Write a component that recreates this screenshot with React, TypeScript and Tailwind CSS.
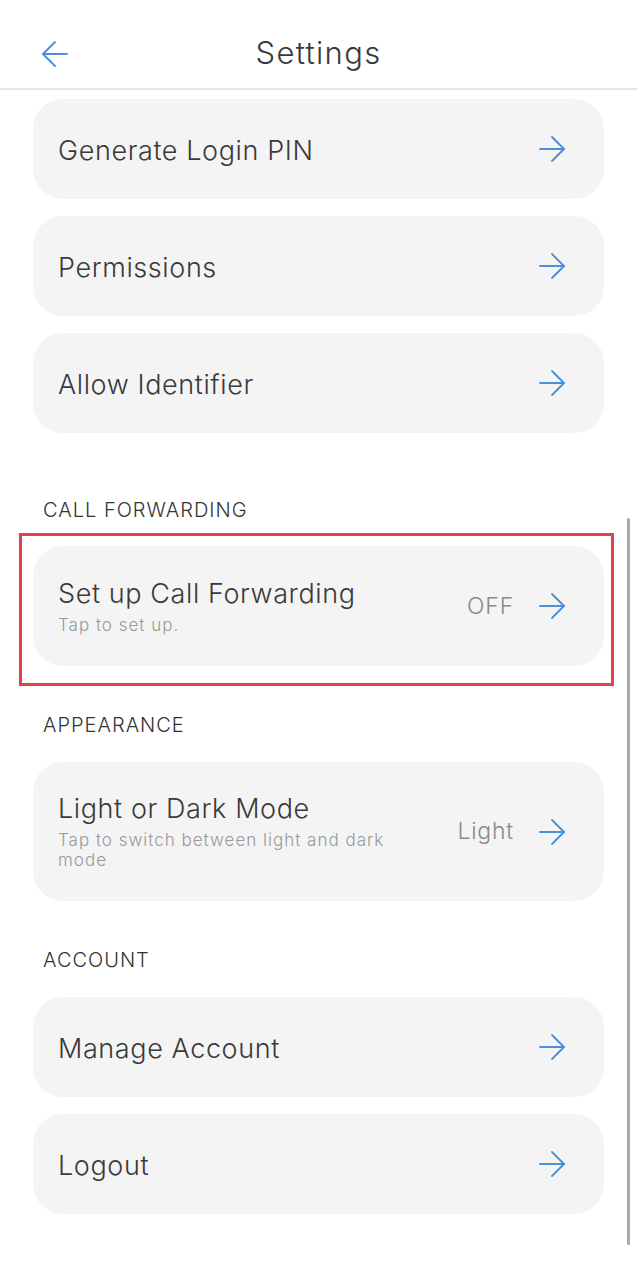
import React from "react";

const Arrow = ({ left = false }: { left?: boolean }) => (
  <svg
    width="26"
    height="26"
    viewBox="0 0 26 26"
    fill="none"
    stroke="#4a90d6"
    strokeWidth="1.8"
    strokeLinecap="round"
    strokeLinejoin="round"
    className={left ? "rotate-180" : ""}
  >
    <path d="M1 13H25" />
    <path d="M13 1L25 13L13 25" />
  </svg>
);

const Card = ({
  title,
  sub,
  value,
  h,
}: {
  title: string;
  sub?: string;
  value?: string;
  h: string;
}) => (
  <div className={`flex items-center rounded-[30px] bg-[#f4f4f4] pl-[25px] pr-[39px] ${h}`}>
    <div className={`flex-1 min-w-0 ${sub ? "" : "pt-[4px]"}`}>
      <div className="text-[27px] leading-[32px] tracking-[0.6px] text-[#3a3a3a] font-light">{title}</div>
      {sub && (
        <div className="mt-[5px] w-[350px] text-[17px] leading-[20px] tracking-[1px] text-[#999999] font-light">
          {sub}
        </div>
      )}
    </div>
    {value && (
      <div className="mr-[25px] text-[23px] tracking-[0.8px] text-[#8a8a8a] font-light">{value}</div>
    )}
    <Arrow />
  </div>
);

const Heading = ({ children, cls }: { children: React.ReactNode; cls: string }) => (
  <div className={`pl-[10px] text-[20px] leading-[24px] tracking-[1px] text-[#333] font-light ${cls}`}>
    {children}
  </div>
);

export default function App() {
  return (
    <div
      className="relative w-[637px] h-[1280px] bg-white overflow-hidden"
      style={{ fontFamily: "Inter, 'Noto Sans', sans-serif" }}
    >
      <header className="relative flex h-[90px] items-center justify-center border-b-2 border-[#e6e6e6]">
        <div className="absolute left-[42px] top-[41px]">
          <Arrow left />
        </div>
        <div className="text-[31px] tracking-[1.3px] text-[#3a3a3a] font-light mt-[18px]">Settings</div>
      </header>
      <main className="px-[33px] pt-[9px]">
        <div className="flex flex-col gap-[17px]">
          <Card title="Generate Login PIN" h="h-[100px]" />
          <Card title="Permissions" h="h-[100px]" />
          <Card title="Allow Identifier" h="h-[100px]" />
        </div>
        <Heading cls="mt-[65px]">CALL FORWARDING</Heading>
        <div className="relative mt-[24px]">
          <Card title="Set up Call Forwarding" sub="Tap to set up." value="OFF" h="h-[120px]" />
          <div className="pointer-events-none absolute -top-[13px] -bottom-[20px] -left-[14px] -right-[10px] border-[3px] border-[#e1434d]" />
        </div>
        <Heading cls="mt-[47px]">APPEARANCE</Heading>
        <div className="mt-[25px]">
          <Card
            title="Light or Dark Mode"
            sub="Tap to switch between light and dark mode"
            value="Light"
            h="h-[139px]"
          />
        </div>
        <Heading cls="mt-[47px]">ACCOUNT</Heading>
        <div className="mt-[25px] flex flex-col gap-[17px]">
          <Card title="Manage Account" h="h-[100px]" />
          <Card title="Logout" h="h-[100px]" />
        </div>
      </main>
      <div className="absolute left-[627px] top-[518px] h-[727px] w-[3px] rounded-full bg-[#a9a9a9]" />
    </div>
  );
}
